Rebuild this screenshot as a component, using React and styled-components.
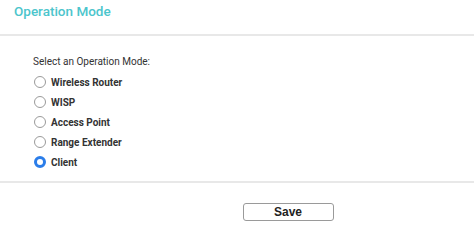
import React, { useState } from "react";
import styled, { createGlobalStyle } from "styled-components";

const GlobalStyle = createGlobalStyle`
  body {
    margin: 0;
    background: #fff;
    font-family: Roboto, "Liberation Sans", Arial, sans-serif;
  }
`;

const modes = ["Wireless Router", "WISP", "Access Point", "Range Extender", "Client"];

const App = () => {
  const [mode, setMode] = useState("Client");

  return (
    <Page>
      <GlobalStyle />
      <Header>
        <Title>Operation Mode</Title>
      </Header>
      <Body>
        <Prompt>Select an Operation Mode:</Prompt>
        <RadioList>
          {modes.map((m) => (
            <RadioRow key={m} onClick={() => setMode(m)}>
              <RadioCircle $checked={mode === m} />
              <RadioLabel>{m}</RadioLabel>
            </RadioRow>
          ))}
        </RadioList>
      </Body>
      <Footer>
        <SaveButton>Save</SaveButton>
      </Footer>
    </Page>
  );
};

export default App;

const Page = styled.div`
  width: 474px;
  height: 225px;
  display: flex;
  flex-direction: column;
  overflow: hidden;
`;

const Header = styled.div`
  height: 36px;
  padding: 0px 0px 0px 14px;
  border-bottom: 2px solid #e8e8e8;
  box-sizing: border-box;
  display: flex;
  align-items: flex-start;
`;

const Title = styled.div`
  font-family: Roboto, "Noto Sans", sans-serif;
  font-weight: 500;
  font-size: 13.5px;
  color: #4cc5cc;
  margin: 3px 0px 0px 0px;
`;

const Body = styled.div`
  padding: 19px 0px 0px 33px;
  height: 147px;
  box-sizing: border-box;
  border-bottom: 2px solid #e8e8e8;
`;

const Prompt = styled.div`
  font-size: 10px;
  color: #333;
  line-height: 14px;
`;

const RadioList = styled.div`
  display: flex;
  flex-direction: column;
  margin: 3px 0px 0px 0px;
`;

const RadioRow = styled.div`
  display: flex;
  align-items: center;
  height: 20px;
  cursor: pointer;
`;

const RadioCircle = styled.span`
  width: 12px;
  height: 12px;
  border-radius: 50%;
  box-sizing: border-box;
  margin: 0px 0px 0px 1px;
  border: ${(p) => (p.$checked ? "3px solid #2b7de9" : "1px solid #9a9a9a")};
  background: #fff;
`;

const RadioLabel = styled.span`
  font-size: 10px;
  font-weight: 700;
  color: #333;
  margin: 0px 0px 0px 5px;
`;

const Footer = styled.div`
  display: flex;
  justify-content: center;
  padding: 20px 0px 0px 102px;
`;

const SaveButton = styled.button`
  width: 91px;
  height: 18px;
  border: 1px solid #9a9a9a;
  border-radius: 3px;
  background: #fff;
  font-family: "Liberation Sans", Arial, sans-serif;
  font-weight: 700;
  font-size: 12px;
  color: #222;
  padding: 0;
  cursor: pointer;
`;
